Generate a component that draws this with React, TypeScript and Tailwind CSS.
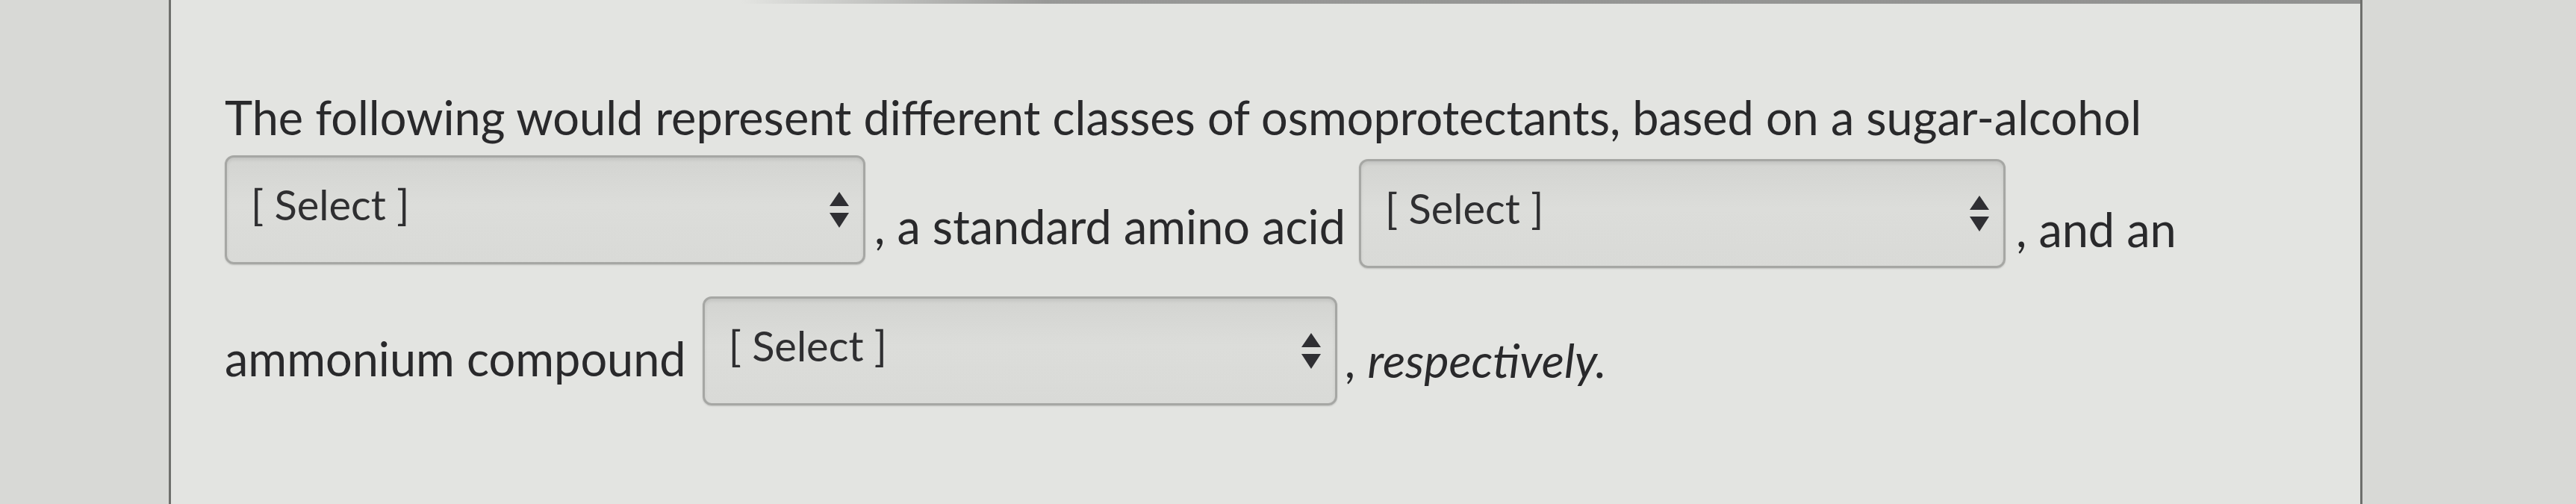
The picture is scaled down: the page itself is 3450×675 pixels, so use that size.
import React from "react";

function Arrows() {
  return (
    <svg width="28" height="50" viewBox="0 0 28 50" className="shrink-0">
      <polygon points="14,1 27,20 1,20" fill="#2f2f33" />
      <polygon points="1,29 27,29 14,49" fill="#2f2f33" />
    </svg>
  );
}

function SelectBox({ mt, w }: { mt: string; w: string }) {
  return (
    <div
      className={`${mt} ${w} h-[146px] shrink-0 rounded-[12px] border-[3px] border-[#a6a7a4] bg-[linear-gradient(180deg,#d3d4d1_0%,#dcddda_45%,#d9dad7_100%)] shadow-[inset_0_3px_4px_rgba(0,0,0,0.08),0_1px_2px_rgba(0,0,0,0.15)] flex items-center justify-between pl-[32px] pr-[18px]`}
    >
      <span className="text-[56px] leading-[66px] text-[#2f2f31] -mt-[14px]">[ Select ]</span>
      <Arrows />
    </div>
  );
}

export default function App() {
  return (
    <div
      className="w-[3450px] h-[675px] overflow-hidden bg-[#d8d9d6] text-[#29292b]"
      style={{ fontFamily: "Lato, 'Open Sans', 'Liberation Sans', sans-serif" }}
    >
      <div className="ml-[226px] w-[2938px] h-[675px] border-l-[3px] border-r-[3px] border-[#6e6f6c] bg-[#e3e4e1] flex flex-col">
        <div className="h-[5px] w-full bg-[linear-gradient(90deg,rgba(0,0,0,0)_0%,rgba(0,0,0,0)_26%,rgba(90,90,90,0.55)_40%,rgba(90,90,90,0.6)_100%)]" />
        <div className="pl-[72px] pt-[113px] flex flex-col">
          <div className="text-[63px] leading-[77px] whitespace-nowrap">
            The following would represent different classes of osmoprotectants, based on a sugar-alcohol
          </div>
          <div className="flex items-start">
            <SelectBox mt="mt-[13px]" w="w-[858px]" />
            <div className="mt-[69px] ml-[12px] text-[63px] leading-[77px] whitespace-nowrap">, a standard amino acid</div>
            <div className="ml-[18px] flex">
              <SelectBox mt="mt-[18px]" w="w-[866px]" />
            </div>
            <div className="mt-[73px] ml-[14px] text-[63px] leading-[77px] whitespace-nowrap">, and an</div>
          </div>
          <div className="flex items-start">
            <div className="mt-[82px] text-[63px] leading-[77px] whitespace-nowrap">ammonium compound</div>
            <div className="ml-[22px] flex">
              <SelectBox mt="mt-[38px]" w="w-[850px]" />
            </div>
            <div className="mt-[84px] ml-[12px] text-[63px] leading-[77px] whitespace-nowrap italic">, respectively.</div>
          </div>
        </div>
      </div>
    </div>
  );
}
